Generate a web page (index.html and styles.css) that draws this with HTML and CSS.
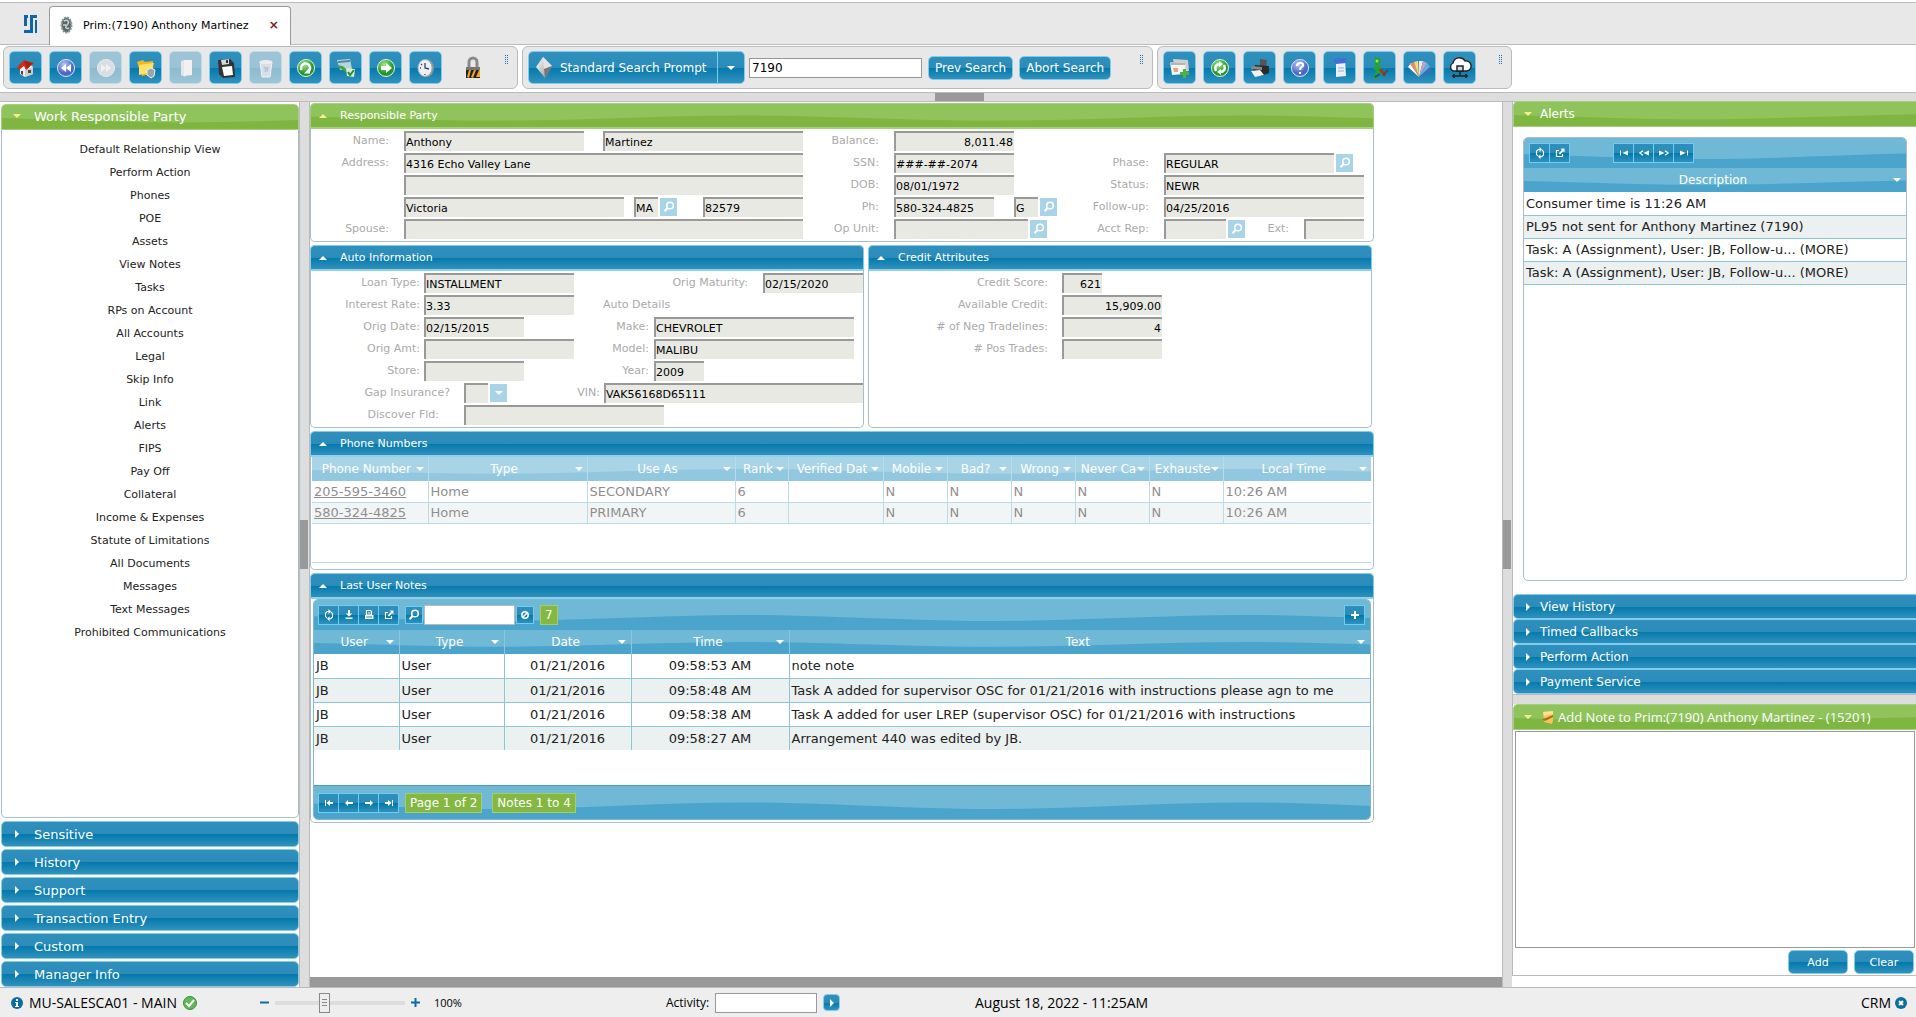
FILE: index.html
```html
<!DOCTYPE html>
<html lang="en">
<head>
    <meta charset="UTF-8">
    <meta name="viewport" content="width=device-width, initial-scale=1.0">
    <title>Prim:(7190) Anthony Martinez</title>
    <link rel="stylesheet" href="styles.css">
</head>
<body>
    <!-- Shared icons -->
    <svg class="sprite" width="0" height="0">
        <defs>
            <radialGradient id="g-green" cx="40%" cy="30%"><stop offset="0" stop-color="#a5e88a"/><stop offset="1" stop-color="#23952a"/></radialGradient>
            <radialGradient id="g-blue" cx="40%" cy="30%"><stop offset="0" stop-color="#b9c8f5"/><stop offset="1" stop-color="#4c68c4"/></radialGradient>
            <linearGradient id="g-grey" x1="0" y1="0" x2="1" y2="1"><stop offset="0" stop-color="#fff"/><stop offset="1" stop-color="#8d8d8d"/></linearGradient>
        </defs>
        <symbol id="i-search" viewBox="0 0 14 14"><circle cx="8" cy="5.5" r="3.3" fill="none" stroke="currentColor" stroke-width="1.5"/><path d="M5.6 8 2.5 11.3" stroke="currentColor" stroke-width="2"/></symbol>
        <symbol id="i-refresh" viewBox="0 0 14 14"><path d="M7.5 3.500H5.200L3.500 5.200v3.300L5 10M6.500 10.700h2.300L10.500 9V5.600L9 4" fill="none" stroke="currentColor" stroke-width="1.100"/><path d="M6.500 1v5L9 3.500zM7.500 8.200v5L5 10.700z" fill="currentColor"/></symbol>
        <symbol id="i-download" viewBox="0 0 14 14"><path d="M6 2h2v3.500h2.200L7 8.500 3.800 5.500H6zM3.500 9.500h7V11h-7z" fill="currentColor"/></symbol>
        <symbol id="i-print" viewBox="0 0 14 14"><path d="M4.500 2.500h4l1 1V7h-5z" fill="none" stroke="currentColor" stroke-width="1.200"/><path d="M3 7h8.500v4H3zM6 4.500h2.500v1H6z" fill="currentColor"/><path d="M4.500 9h5.500" stroke="#0b7fae"/></symbol>
        <symbol id="i-popout" viewBox="0 0 14 14"><path d="M6 4.500H3.500v6h6V8" fill="none" stroke="currentColor" stroke-width="1.200"/><path d="M7.500 2.500h4v4L10.200 5.200 7 8.500 5.800 7.300 9 4z" fill="currentColor"/></symbol>
        <symbol id="i-cancel" viewBox="0 0 14 14"><circle cx="7" cy="7" r="3.2" fill="none" stroke="currentColor" stroke-width="1.500"/><path d="M5 9l4-4" stroke="currentColor" stroke-width="1.500"/></symbol>
        <symbol id="i-plus" viewBox="0 0 14 14"><path d="M6 3h2v3h3v2H8v3H6V8H3V6h3z" fill="currentColor"/></symbol>
        <symbol id="i-left" viewBox="0 0 14 14"><path d="M3 7 6 4v2h5v2H6v2z" fill="currentColor"/></symbol>
        <symbol id="i-right" viewBox="0 0 14 14"><path d="M11 7 8 4v2H3v2h5v2z" fill="currentColor"/></symbol>
        <symbol id="i-first" viewBox="0 0 14 14"><path d="M3 4h1v6H3zM4.500 7 8 4v2h3v2H8v2z" fill="currentColor"/></symbol>
        <symbol id="i-last" viewBox="0 0 14 14"><path d="M10 4h1v6h-1zM9.500 7 6 4v2H3v2h3v2z" fill="currentColor"/></symbol>
        <symbol id="i-seek-first" viewBox="0 0 14 14"><path d="M3 4.500h1v5H3zM11 4.500v5L5.500 7z" fill="currentColor"/></symbol>
        <symbol id="i-seek-prev" viewBox="0 0 14 14"><path d="M12 4.500v5L6.500 7z" fill="currentColor"/><path d="M6 4.800 2.800 7 6 9.200" fill="none" stroke="currentColor" stroke-width="1.200"/></symbol>
        <symbol id="i-seek-next" viewBox="0 0 14 14"><path d="M2 4.500v5L7.500 7z" fill="currentColor"/><path d="M8 4.800 11.200 7 8 9.200" fill="none" stroke="currentColor" stroke-width="1.200"/></symbol>
        <symbol id="i-seek-last" viewBox="0 0 14 14"><path d="M10 4.500h1v5h-1zM3 4.500v5L8.500 7z" fill="currentColor"/></symbol>
    </svg>

    <div class="tabs">
        <svg class="brand" width="14" height="18" viewBox="0 0 14 18"><path d="M6 0h7v3H9v15H0v-3h6zM0 0h4v3H3v8H0zM11 5h2v13h-2z" fill="#0d66a8"/></svg>
        <div class="tab">
            <svg width="13" height="18" viewBox="0 0 13 18"><ellipse cx="6.500" cy="9" rx="5" ry="7.500" fill="#566866" stroke="#8b9a98" stroke-width="2" stroke-dasharray="2 1"/><path d="M4 5c4-2 6 1 3 4s0 4 2 3M3 9h3" fill="none" stroke="#c5d0ce" stroke-width="1.500"/></svg>
            <span>Prim:(7190) Anthony Martinez</span>
            <button class="tab-close" aria-label="Close tab">×</button>
        </div>
    </div>

    <div class="toolbar">
        <div class="group main-group">
            <button class="tool" aria-label="Home"><svg viewBox="0 0 20 20"><path d="M4 9v7l5 3 8-3V9l-5-5z" fill="#eee"/><path d="M9 19v-7l8-3v7z" fill="#ccc"/><path d="M1 9 8 2l10 3-8 7-2-4-5 4z" fill="#c8321c"/><path d="M8 3l9 2-6 6z" fill="#a52312"/><path d="M5 13h2v4l-2-1zM12 12h3v3h-3z" fill="#543"/></svg></button>
            <button class="tool" aria-label="Back"><svg viewBox="0 0 20 20"><circle cx="10" cy="10" r="8.500" fill="url(#g-blue)" stroke="#dfe5f5"/><path d="M10 6v8l-5-4zM15 6v8l-5-4z" fill="#fff"/></svg></button>
            <button class="tool off" aria-label="Forward" disabled><svg viewBox="0 0 20 20"><circle cx="10" cy="10" r="8.500" fill="#c7cfdf" stroke="#eee"/><path d="M10 6v8l5-4zM5 6v8l5-4z" fill="#fff"/></svg></button>
            <button class="tool" aria-label="Open folder"><svg viewBox="0 0 20 20"><path d="M1 4l6-2 2 2 8-1v4l1 8-12 3z" fill="#f2b91e"/><path d="M3 7l15-2-3 9-12 3z" fill="#ffe368"/><path d="M11 12l4-2 4 2-1 6-3 2-4-3z" fill="#9aa5aa" stroke="#eee"/></svg></button>
            <button class="tool off" aria-label="Copy" disabled><svg viewBox="0 0 20 20"><path d="M5 3l4-1v17l-4-2z" fill="#dfe7eb"/><path d="M8 2h8v15l-8 1z" fill="#fff"/></svg></button>
            <button class="tool" aria-label="Save"><svg viewBox="0 0 20 20"><path d="M2 2l12-1 4 4 1 14-12 1-4-4z" fill="#333"/><path d="M5 2l8-1v5L6 7z" fill="#d5d8da"/><path d="M6 9l10-1 1 9-9 1z" fill="#fff"/><path d="M10 2h2v3h-2z" fill="#333"/></svg></button>
            <button class="tool off" aria-label="Delete" disabled><svg viewBox="0 0 20 20"><path d="M4 4h12l-2 15H6z" fill="#c2d2e8" stroke="#fff"/><ellipse cx="10" cy="4" rx="6.500" ry="2" fill="#eef3fa"/><path d="M8 9l4 4m0-4-3 5" stroke="#7690c4" stroke-width="2"/></svg></button>
            <button class="tool" aria-label="Reload"><svg viewBox="0 0 20 20"><circle cx="10" cy="10" r="8.500" fill="url(#g-green)" stroke="#dff5dd"/><path d="M5.500 12a4.500 4.500 0 1 1 7 1.500" fill="none" stroke="#fff" stroke-width="2.500"/><path d="M14 9v6.500H8z" fill="#fff"/></svg></button>
            <button class="tool" aria-label="Transfer records"><svg viewBox="0 0 20 20"><path d="M1 2l13-1 2 10-12 1z" fill="#b9d3dd"/><path d="M2 4l12-1" stroke="#508aa6" stroke-width="2"/><path d="M3 9c5-1 5 4 8 4" fill="none" stroke="#3aa63d" stroke-width="3"/><path d="M10 10l9 1-1 8-7-1z" fill="#dceadb"/><path d="M12 14l2 3 4-5" fill="none" stroke="#249029" stroke-width="2"/></svg></button>
            <button class="tool" aria-label="Go"><svg viewBox="0 0 20 20"><circle cx="10" cy="10" r="8.500" fill="url(#g-green)" stroke="#dff5dd"/><path d="M5 8h5V5l6 5-6 5v-3H5z" fill="#fff"/></svg></button>
            <button class="tool" aria-label="History"><svg viewBox="0 0 20 20"><ellipse cx="11" cy="10" rx="7" ry="9" fill="#87939a"/><ellipse cx="9" cy="10" rx="7" ry="8.500" fill="#edf0f2" stroke="#a3adb3"/><path d="M9 5v5l4 1M4 10h1M9 17v-1M5 6l1 1" stroke="#37474f" stroke-width="1.300" fill="none"/></svg></button>
            <svg class="lock" width="16" height="23" viewBox="0 0 16 23"><path d="M4 13V6a4 4 0 0 1 8 0v7" fill="none" stroke="#8a8a8a" stroke-width="3"/><path d="M1 13h14v9H1z" fill="#222"/><path d="M2 21l2-7h2l-2 8zM6 21l3-7h2l-3 8zM11 21l3-7h1v7z" fill="#f0a62a"/><path d="M1 11h14v3H1z" fill="#777"/></svg>
            <span class="grip"></span>
        </div>
        <div class="group search-group">
            <div class="combo">
                <button class="combo-main"><svg width="16" height="24" viewBox="0 0 16 24"><path d="M7 1 16 10 9 22 0 11z" fill="url(#g-grey)"/><path d="M7 1l1 12 8-3z" fill="#e4e4e4"/><path d="M8 13l8-3-7 12z" fill="#777"/></svg>Standard Search Prompt</button>
                <button class="combo-arrow" aria-label="Choose search prompt"><i class="tri down"></i></button>
            </div>
            <input class="search-box" type="text" value="7190" aria-label="Search">
            <button class="btn">Prev Search</button>
            <button class="btn">Abort Search</button>
            <span class="grip"></span>
        </div>
        <div class="group side-group">
            <button class="tool" aria-label="Add window"><svg viewBox="0 0 20 20"><path d="M3 1l15 1 1 11-14 2z" fill="#cfcfcf"/><path d="M0 4l15 1 1 11-14 1z" fill="#f4f4f2"/><path d="M0 4l15 1v2L1 7z" fill="#b5b5b5"/><path d="M3 10h5v4H4z" fill="#e9a48a"/><path d="M13 11h3v3h3v3h-3v3h-3v-3h-3v-3h3z" fill="#4db33e"/></svg></button>
            <button class="tool" aria-label="Refresh"><svg viewBox="0 0 20 20"><circle cx="10" cy="10" r="8.500" fill="url(#g-green)" stroke="#dff5dd"/><path d="M6 13c-2-4 0-7 4-7M14 7c2 4 0 7-4 7" fill="none" stroke="#fff" stroke-width="2.500"/><path d="M9 3l4 3-4 3zM11 11v6l-4-3z" fill="#fff"/></svg></button>
            <button class="tool" aria-label="Print"><svg viewBox="0 0 20 20"><path d="M10 1l7 1-1 7h-6z" fill="#555"/><path d="M5 7l14 1v7l-8 3-8-5z" fill="#2b2b2b"/><path d="M2 8l10 1v3L1 11z" fill="#888"/><path d="M1 13l9-1 4 5-9 2z" fill="#f1f1f1"/></svg></button>
            <button class="tool" aria-label="Help"><svg viewBox="0 0 20 20"><circle cx="10" cy="10" r="8.500" fill="url(#g-blue)" stroke="#dfe5f5"/><path d="M7 8c0-4 7-4 6-1 0 2-3 2-3 5M10 14v2" fill="none" stroke="#fff" stroke-width="2.200"/></svg></button>
            <button class="tool" aria-label="Document"><svg viewBox="0 0 20 20"><path d="M6 1h9l1 17-10 1z" fill="#eaf0f4"/><path d="M3 2l4-2h9v5l-10 1z" fill="#3f6fd8"/><path d="M8 10h6M8 13h6" stroke="#9fb0bd"/></svg></button>
            <button class="tool" aria-label="Routes"><svg viewBox="0 0 20 20"><path d="M5-1l5 1 1 4-2 3 3 3-2 3 2 3-5 5H2l4-8-3-3 3-3-2-3z" fill="#22a33a"/><circle cx="7" cy="3" r="1.500" fill="#b7d94c"/><path d="M10 11l5 7" stroke="#a8322c" stroke-width="2.500"/><path d="M13 17l5-5" stroke="#5c4646" stroke-width="2"/><path d="M5 19l5-3" stroke="#2b3fc0" stroke-width="2"/></svg></button>
            <button class="tool" aria-label="Colors"><svg viewBox="0 0 20 20"><path d="M9 19-2 9l3-4z" fill="#fff"/><path d="M9 19 0 6l4-2z" fill="#e58a70"/><path d="M9 19 4 4l4-1z" fill="#f5dd7a"/><path d="M9 19V3h4z" fill="#efe9d8"/><path d="M9 19l4-16 4 2z" fill="#c79bd0"/><path d="M9 19l8-14 3 4z" fill="#5ab3dd"/><path d="M9 19 20 9l2 5z" fill="#3c6eb0"/></svg></button>
            <button class="tool" aria-label="Cloud network"><svg viewBox="0 0 24 24"><path d="M5 15a4.500 4.500 0 0 1 0-8 6.500 6.500 0 0 1 12-2 5 5 0 0 1 2 10z" fill="#fff" stroke="#222" stroke-width="1.400"/><path d="M9 10h6v5H9z" fill="#bfe0ee" stroke="#222" stroke-width="1.500"/><path d="M12 15v5M4 20h16M6 18v4M18 18v4" fill="none" stroke="#222" stroke-width="1.500"/></svg></button>
            <span class="grip"></span>
        </div>
    </div>
    <div class="splitter-h"><span class="thumb"></span></div>

    <div class="workspace">
        <aside class="left-pane">
            <h2 class="bar green"><i class="tri down"></i>Work Responsible Party</h2>
            <nav class="menu">
                <a href="#">Default Relationship View</a>
                <a href="#">Perform Action</a>
                <a href="#">Phones</a>
                <a href="#">POE</a>
                <a href="#">Assets</a>
                <a href="#">View Notes</a>
                <a href="#">Tasks</a>
                <a href="#">RPs on Account</a>
                <a href="#">All Accounts</a>
                <a href="#">Legal</a>
                <a href="#">Skip Info</a>
                <a href="#">Link</a>
                <a href="#">Alerts</a>
                <a href="#">FIPS</a>
                <a href="#">Pay Off</a>
                <a href="#">Collateral</a>
                <a href="#">Income &amp; Expenses</a>
                <a href="#">Statute of Limitations</a>
                <a href="#">All Documents</a>
                <a href="#">Messages</a>
                <a href="#">Text Messages</a>
                <a href="#">Prohibited Communications</a>
            </nav>
            <button class="bar blue"><i class="tri right"></i>Sensitive</button>
            <button class="bar blue"><i class="tri right"></i>History</button>
            <button class="bar blue"><i class="tri right"></i>Support</button>
            <button class="bar blue"><i class="tri right"></i>Transaction Entry</button>
            <button class="bar blue"><i class="tri right"></i>Custom</button>
            <button class="bar blue"><i class="tri right"></i>Manager Info</button>
        </aside>

        <div class="splitter-v"><span class="thumb"></span></div>

        <main class="center">
            <div class="panels">
                <section class="panel party">
                    <h3 class="bar green"><i class="tri up"></i>Responsible Party</h3>
                    <div class="form">
                        <div class="block">
                            <div class="row"><label class="l-name" for="first">Name:</label><input class="w180" id="first" value="Anthony" readonly><input class="push w200" aria-label="Last name" value="Martinez" readonly></div>
                            <div class="row"><label class="l-name" for="addr">Address:</label><input class="fill" id="addr" value="4316 Echo Valley Lane" readonly></div>
                            <div class="row"><span class="l-name"></span><input class="fill" aria-label="Address line 2" readonly></div>
                            <div class="row"><span class="l-name"></span><input class="w220" aria-label="City" value="Victoria" readonly><input class="w24 gap10" aria-label="State" value="MA" readonly><button class="pick" aria-label="Look up state"><svg><use href="#i-search"/></svg></button><input class="push w100" aria-label="Zip" value="82579" readonly></div>
                            <div class="row"><label class="l-name" for="spouse">Spouse:</label><input class="fill" id="spouse" readonly></div>
                        </div>
                        <div class="block mid">
                            <div class="row"><label class="l-bal" for="bal">Balance:</label><input class="w120 num" id="bal" value="8,011.48" readonly></div>
                            <div class="row"><label class="l-bal" for="ssn">SSN:</label><input class="w120" id="ssn" value="###-##-2074" readonly></div>
                            <div class="row"><label class="l-bal" for="dob">DOB:</label><input class="w120" id="dob" value="08/01/1972" readonly></div>
                            <div class="row"><label class="l-bal" for="ph">Ph:</label><input class="w100" id="ph" value="580-324-4825" readonly><input class="w24 gap20" aria-label="Phone status" value="G" readonly><button class="pick" aria-label="Look up phone status"><svg><use href="#i-search"/></svg></button></div>
                            <div class="row"><label class="l-bal" for="op">Op Unit:</label><input class="w134" id="op" readonly><button class="pick" aria-label="Look up op unit"><svg><use href="#i-search"/></svg></button></div>
                        </div>
                        <div class="block end">
                            <div class="row"></div>
                            <div class="row"><label class="l-phase" for="phase">Phase:</label><input class="w170" id="phase" value="REGULAR" readonly><button class="pick" aria-label="Look up phase"><svg><use href="#i-search"/></svg></button></div>
                            <div class="row"><label class="l-phase" for="status">Status:</label><input class="w200" id="status" value="NEWR" readonly></div>
                            <div class="row"><label class="l-phase" for="follow">Follow-up:</label><input class="w200" id="follow" value="04/25/2016" readonly></div>
                            <div class="row"><label class="l-phase" for="rep">Acct Rep:</label><input class="w62" id="rep" readonly><button class="pick" aria-label="Look up account rep"><svg><use href="#i-search"/></svg></button><label class="l-ext" for="ext">Ext:</label><input class="w60" id="ext" readonly></div>
                        </div>
                    </div>
                </section>

                <div class="pair">
                    <section class="panel auto">
                        <h3 class="bar blue"><i class="tri up"></i>Auto Information</h3>
                        <div class="form">
                            <div class="block">
                                <div class="row"><label class="l-loan" for="loan">Loan Type:</label><input class="w150" id="loan" value="INSTALLMENT" readonly></div>
                                <div class="row"><label class="l-loan" for="rate">Interest Rate:</label><input class="w150" id="rate" value="3.33" readonly></div>
                                <div class="row"><label class="l-loan" for="odate">Orig Date:</label><input class="w100" id="odate" value="02/15/2015" readonly></div>
                                <div class="row"><label class="l-loan" for="amt">Orig Amt:</label><input class="w150" id="amt" readonly></div>
                                <div class="row"><label class="l-loan" for="store">Store:</label><input class="w100" id="store" readonly></div>
                                <div class="row"><label class="l-gap" for="gap">Gap Insurance?</label><input class="w24" id="gap" readonly><button class="pick" aria-label="Choose gap insurance"><i class="tri down"></i></button></div>
                                <div class="row"><label class="l-disc" for="disc">Discover Fld:</label><input class="w200" id="disc" readonly></div>
                            </div>
                            <div class="block car">
                                <div class="row last"><label for="mat">Orig Maturity:</label><input class="w100" id="mat" value="02/15/2020" readonly></div>
                                <div class="row"><span class="sub">Auto Details</span></div>
                                <div class="row"><label class="l-make" for="make">Make:</label><input class="w200" id="make" value="CHEVROLET" readonly></div>
                                <div class="row"><label class="l-make" for="model">Model:</label><input class="w200" id="model" value="MALIBU" readonly></div>
                                <div class="row"><label class="l-make" for="year">Year:</label><input class="w50" id="year" value="2009" readonly></div>
                                <div class="row"><label class="l-vin" for="vin">VIN:</label><input class="fill" id="vin" value="VAK56168D65111" readonly></div>
                            </div>
                        </div>
                    </section>
                    <section class="panel credit">
                        <h3 class="bar blue"><i class="tri up"></i>Credit Attributes</h3>
                        <div class="form">
                            <div class="block">
                                <div class="row"><label class="l-score" for="score">Credit Score:</label><input class="w40 num" id="score" value="621" readonly></div>
                                <div class="row"><label class="l-score" for="avail">Available Credit:</label><input class="w100 num" id="avail" value="15,909.00" readonly></div>
                                <div class="row"><label class="l-score" for="neg"># of Neg Tradelines:</label><input class="w100 num" id="neg" value="4" readonly></div>
                                <div class="row"><label class="l-score" for="pos"># Pos Trades:</label><input class="w100 num" id="pos" readonly></div>
                            </div>
                        </div>
                    </section>
                </div>

                <section class="panel">
                    <h3 class="bar blue"><i class="tri up"></i>Phone Numbers</h3>
                    <div class="grid-box phones-box">
                        <table class="grid phones">
                            <colgroup><col class="p1"><col class="p2"><col class="p3"><col class="p4"><col class="p5"><col class="p6"><col class="p6"><col class="p6"><col class="p7"><col class="p7"><col></colgroup>
                            <thead>
                                <tr>
                                    <th><div><span>Phone Number</span><i class="tri down"></i></div></th>
                                    <th><div><span>Type</span><i class="tri down"></i></div></th>
                                    <th><div><span>Use As</span><i class="tri down"></i></div></th>
                                    <th><div><span>Rank</span><i class="tri down"></i></div></th>
                                    <th><div><span>Verified Dat</span><i class="tri down"></i></div></th>
                                    <th><div><span>Mobile</span><i class="tri down"></i></div></th>
                                    <th><div><span>Bad?</span><i class="tri down"></i></div></th>
                                    <th><div><span>Wrong</span><i class="tri down"></i></div></th>
                                    <th><div><span>Never Ca</span><i class="tri down"></i></div></th>
                                    <th><div><span>Exhauste</span><i class="tri down"></i></div></th>
                                    <th><div><span>Local Time</span><i class="tri down"></i></div></th>
                                </tr>
                            </thead>
                            <tbody>
                                <tr><td><a href="#">205-595-3460</a></td><td>Home</td><td>SECONDARY</td><td>6</td><td></td><td>N</td><td>N</td><td>N</td><td>N</td><td>N</td><td>10:26 AM</td></tr>
                                <tr><td><a href="#">580-324-4825</a></td><td>Home</td><td>PRIMARY</td><td>6</td><td></td><td>N</td><td>N</td><td>N</td><td>N</td><td>N</td><td>10:26 AM</td></tr>
                            </tbody>
                        </table>
                    </div>
                </section>

                <section class="panel">
                    <h3 class="bar blue"><i class="tri up"></i>Last User Notes</h3>
                    <div class="grid-box notes-box">
                        <div class="grid-tools">
                            <div class="minis">
                                <button class="mini" aria-label="Refresh"><svg><use href="#i-refresh"/></svg></button>
                                <button class="mini" aria-label="Download"><svg><use href="#i-download"/></svg></button>
                                <button class="mini" aria-label="Print"><svg><use href="#i-print"/></svg></button>
                                <button class="mini" aria-label="Pop out"><svg><use href="#i-popout"/></svg></button>
                            </div>
                            <div class="filter">
                                <button class="mini" aria-label="Search notes"><svg><use href="#i-search"/></svg></button>
                                <input type="text" aria-label="Search text">
                                <button class="mini" aria-label="Clear search"><svg><use href="#i-cancel"/></svg></button>
                            </div>
                            <span class="badge">7</span>
                            <button class="mini add" aria-label="Add note"><svg><use href="#i-plus"/></svg></button>
                        </div>
                        <table class="grid notes">
                            <colgroup><col class="n1"><col class="n2"><col class="n3"><col class="n4"><col></colgroup>
                            <thead>
                                <tr>
                                    <th><div><span>User</span><i class="tri down"></i></div></th>
                                    <th><div><span>Type</span><i class="tri down"></i></div></th>
                                    <th><div><span>Date</span><i class="tri down"></i></div></th>
                                    <th><div><span>Time</span><i class="tri down"></i></div></th>
                                    <th><div><span>Text</span><i class="tri down"></i></div></th>
                                </tr>
                            </thead>
                            <tbody>
                                <tr><td>JB</td><td>User</td><td class="mid">01/21/2016</td><td class="mid">09:58:53 AM</td><td>note note</td></tr>
                                <tr><td>JB</td><td>User</td><td class="mid">01/21/2016</td><td class="mid">09:58:48 AM</td><td>Task A added for supervisor OSC for 01/21/2016 with instructions please agn to me</td></tr>
                                <tr><td>JB</td><td>User</td><td class="mid">01/21/2016</td><td class="mid">09:58:38 AM</td><td>Task A added for user LREP (supervisor OSC) for 01/21/2016 with instructions</td></tr>
                                <tr><td>JB</td><td>User</td><td class="mid">01/21/2016</td><td class="mid">09:58:27 AM</td><td>Arrangement 440 was edited by JB.</td></tr>
                            </tbody>
                        </table>
                        <div class="grid-foot">
                            <div class="minis">
                                <button class="mini" aria-label="First page"><svg><use href="#i-first"/></svg></button>
                                <button class="mini" aria-label="Previous page"><svg><use href="#i-left"/></svg></button>
                                <button class="mini" aria-label="Next page"><svg><use href="#i-right"/></svg></button>
                                <button class="mini" aria-label="Last page"><svg><use href="#i-last"/></svg></button>
                            </div>
                            <span class="badge">Page 1 of 2</span>
                            <span class="badge">Notes 1 to 4</span>
                        </div>
                    </div>
                </section>
            </div>
            <div class="hscroll"></div>
        </main>

        <div class="splitter-v"><span class="thumb"></span></div>

        <aside class="right-pane">
            <h3 class="bar green"><i class="tri down"></i>Alerts</h3>
            <div class="alerts">
                <div class="grid-box alerts-box">
                    <div class="grid-tools">
                        <div class="minis">
                            <button class="mini" aria-label="Refresh"><svg><use href="#i-refresh"/></svg></button>
                            <button class="mini" aria-label="Pop out"><svg><use href="#i-popout"/></svg></button>
                        </div>
                        <div class="minis seek">
                            <button class="mini" aria-label="First"><svg><use href="#i-seek-first"/></svg></button>
                            <button class="mini" aria-label="Previous"><svg><use href="#i-seek-prev"/></svg></button>
                            <button class="mini" aria-label="Next"><svg><use href="#i-seek-next"/></svg></button>
                            <button class="mini" aria-label="Last"><svg><use href="#i-seek-last"/></svg></button>
                        </div>
                    </div>
                    <table class="grid alert-list">
                        <thead><tr><th><div><span>Description</span><i class="tri down"></i></div></th></tr></thead>
                        <tbody>
                            <tr><td>Consumer time is 11:26 AM</td></tr>
                            <tr><td>PL95 not sent for Anthony Martinez (7190)</td></tr>
                            <tr><td>Task: A (Assignment), User: JB, Follow-u... (MORE)</td></tr>
                            <tr><td>Task: A (Assignment), User: JB, Follow-u... (MORE)</td></tr>
                        </tbody>
                    </table>
                </div>
            </div>
            <button class="bar blue"><i class="tri right"></i>View History</button>
            <button class="bar blue"><i class="tri right"></i>Timed Callbacks</button>
            <button class="bar blue"><i class="tri right"></i>Perform Action</button>
            <button class="bar blue"><i class="tri right"></i>Payment Service</button>
            <div class="split-gap"></div>
            <h3 class="bar green note-head"><i class="tri down"></i><svg width="12" height="15" viewBox="0 0 12 15"><path d="M1 2l10-1v10l-1 3-8-2z" fill="#f6c35b"/><path d="M0 9l4-1 7-3v2L3 11z" fill="#a86c1f"/><path d="M1 2l10-1v3L2 6z" fill="#ffdf95"/></svg><label for="note">Add Note to Prim:(7190) Anthony Martinez - (15201)</label></h3>
            <textarea id="note"></textarea>
            <div class="note-actions">
                <button class="btn">Add</button>
                <button class="btn">Clear</button>
            </div>
        </aside>
    </div>

    <footer class="status">
        <div class="server">
            <svg width="12" height="12" viewBox="0 0 12 12"><circle cx="6" cy="6" r="6" fill="#0a6f9e"/><path d="M5 2h2v2H5zM4 5h3v4h1v1H4V9h1V6H4z" fill="#fff"/></svg>
            <span>MU-SALESCA01 - MAIN</span>
            <svg width="14" height="14" viewBox="0 0 14 14"><circle cx="7" cy="7" r="6.500" fill="#5fb85a" stroke="#3c8f3a"/><path d="M3 7l3 3 5-6" fill="none" stroke="#fff" stroke-width="2"/></svg>
        </div>
        <div class="zoom">
            <button aria-label="Zoom out"><svg width="9" height="9"><path d="M0 3.500h9v2H0z" fill="#0a6f9e"/></svg></button>
            <input type="range" min="50" max="200" value="105" aria-label="Zoom">
            <button aria-label="Zoom in"><svg width="9" height="9"><path d="M3.500 0h2v3.500H9v2H5.500V9h-2V5.500H0v-2h3.500z" fill="#0a6f9e"/></svg></button>
            <span>100%</span>
        </div>
        <div class="activity">
            <label for="activity">Activity:</label>
            <input type="text" id="activity">
            <button class="go" aria-label="Start activity"><i class="tri right"></i></button>
        </div>
        <div class="clock">August 18, 2022 - 11:25AM</div>
        <div class="crm">CRM <svg width="12" height="12" viewBox="0 0 12 12"><circle cx="6" cy="6" r="6" fill="#0a6f9e"/><path d="M4 4l4 4M8 4l-4 4" stroke="#fff" stroke-width="2"/></svg></div>
    </footer>
</body>
</html>
```

FILE: styles.css
```css
* {
    margin: 0;
    padding: 0;
    box-sizing: border-box;
}

body {
    --blue: linear-gradient(#2f90bd 0, #2b8cbb 50%, #0379ab 51%, #2d8fbc 95%);
    --wave-green: url("data:image/svg+xml,%3Csvg xmlns='http://www.w3.org/2000/svg' width='500' height='26' preserveAspectRatio='none' viewBox='0 0 500 26'%3E%3Cpath fill='%238fc35c' d='M0 0h500v26H0z'/%3E%3Cpath fill='%237fb642' d='M-70 13C10 13 100 19 180 19S350 13 430 13S600 19 680 19V26H-70z'/%3E%3C/svg%3E");
    --wave-blue: url("data:image/svg+xml,%3Csvg xmlns='http://www.w3.org/2000/svg' width='500' height='30' preserveAspectRatio='none' viewBox='0 0 500 30'%3E%3Cpath fill='%236fb8d6' d='M0 0h500v30H0z'/%3E%3Cpath fill='%234aa4cb' d='M-70 15C10 15 100 21 180 21S350 15 430 15S600 21 680 21V30H-70z'/%3E%3C/svg%3E");
    display: flex;
    flex-direction: column;
    height: 100vh;
    min-width: 1200px;
    font-family: "DejaVu Sans", Verdana, sans-serif;
    font-size: 11px;
    color: #222;
    background-color: #fff;
    overflow: hidden;
}

button, input, textarea {
    font-family: inherit;
    font-size: inherit;
}

button {
    border: 0;
    cursor: pointer;
}

.sprite {
    position: absolute;
}

/* arrows */
.tri {
    display: block;
    flex: none;
    width: 0;
    height: 0;
    border: 4px solid transparent;
}

.tri.down {
    border-top-color: currentColor;
    border-bottom-width: 0;
}

.tri.up {
    border-bottom-color: currentColor;
    border-top-width: 0;
}

.tri.right {
    border-left-color: currentColor;
    border-right-width: 0;
    margin: 0 2px;
}

/* tabs */
.tabs {
    display: flex;
    align-items: flex-end;
    height: 43px;
    margin-top: 2px;
    padding-left: 24px;
    background-color: #e8e8e8;
    border-top: 1px solid #bbb;
    border-bottom: 1px solid #bbb;
    flex: none;
}

.brand {
    margin: 0 11px 11px 0;
}

.tab {
    display: flex;
    align-items: center;
    height: 39px;
    width: 242px;
    margin-bottom: -1px;
    padding: 0 0 2px 10px;
    background-color: #fff;
    border: 1px solid #999;
    border-bottom: 0;
    border-radius: 4px 4px 0 0;
    color: #000;
}

.tab span {
    margin: 0 20px 0 10px;
    white-space: nowrap;
}

.tab-close {
    background: none;
    color: #7a1c1c;
    font-size: 12px;
    font-weight: bold;
}

/* toolbar */
.toolbar {
    display: flex;
    gap: 4px;
    padding: 1px 3px 3px;
    border-bottom: 1px solid #bbb;
    flex: none;
}

.group {
    display: flex;
    align-items: center;
    height: 43px;
    padding: 0 5px;
    background-color: #e8e8e8;
    border: 1px solid #bbb;
    border-radius: 6px;
}

.main-group {
    width: 515px;
    gap: 7px;
}

.search-group {
    width: 631px;
}

.side-group {
    width: 355px;
    gap: 7px;
}

.tool {
    display: flex;
    align-items: center;
    justify-content: center;
    width: 33px;
    height: 33px;
    background: var(--blue);
    border: 1px solid #7fcdea;
    border-radius: 5px;
    flex: none;
}

.tool svg {
    width: 20px;
    height: 20px;
    overflow: visible;
}

.side-group .tool:nth-child(8) svg {
    width: 24px;
    height: 24px;
}

.tool.off {
    opacity: 0.4;
}

.lock {
    margin-left: 16px;
}

.grip {
    width: 4px;
    height: 10px;
    margin: 0 3px 18px auto;
    background-image: repeating-linear-gradient(#e8e8e8 0, #e8e8e8 1px, transparent 1px, transparent 2px), repeating-linear-gradient(90deg, #1f6fa0 0, #1f6fa0 1px, transparent 1px, transparent 2px);
}

.combo {
    display: flex;
    width: 217px;
    height: 33px;
    margin-right: 4px;
    background: var(--blue);
    border: 1px solid #7fcdea;
    border-radius: 5px;
}

.combo button {
    display: flex;
    align-items: center;
    background: none;
    color: #fff;
    font-size: 12px;
}

.combo-main {
    flex: 1;
    gap: 8px;
    padding-left: 7px;
    white-space: nowrap;
}

.combo .combo-arrow {
    width: 27px;
    justify-content: center;
    border-left: 1px solid #7fcdea;
}

.search-box {
    width: 173px;
    height: 20px;
    margin-right: 6px;
    padding: 0 2px;
    border: 1px solid #999;
    font-size: 12px;
}

.btn {
    height: 24px;
    padding: 0 6px;
    background: var(--blue);
    border: 1px solid #7fcdea;
    border-radius: 5px;
    color: #fff;
    font-size: 12px;
    white-space: nowrap;
}

.search-group .btn {
    margin-right: 6px;
}

/* splitters */
.splitter-h {
    display: flex;
    justify-content: center;
    height: 9px;
    padding-left: 2px;
    background-color: #ddd;
    border-bottom: 1px solid #bbb;
    flex: none;
}

.splitter-h .thumb {
    width: 49px;
    background-color: #999;
}

.workspace {
    display: flex;
    flex: 1;
    min-height: 0;
}

.splitter-v {
    display: flex;
    align-items: center;
    width: 9px;
    background-color: #ddd;
    flex: none;
}

.splitter-v .thumb {
    width: 8px;
    height: 49px;
    background-color: #999;
}

/* title bars */
.bar {
    display: flex;
    align-items: center;
    width: 100%;
    height: 26px;
    gap: 13px;
    padding-left: 8px;
    border: 1px solid #9ac;
    border-radius: 5px;
    color: #fff;
    font-size: 11px;
    font-weight: normal;
    text-align: left;
    white-space: nowrap;
    flex: none;
}

.bar.blue {
    background: var(--blue);
    border-color: #7fcdea;
}

.bar.green {
    background: var(--wave-green);
    background-size: 500px 100%;
    border-color: #a6cf7c;
    border-radius: 5px 5px 0 0;
}

.bar.green .tri {
    color: #f1f28c;
}

/* left pane */
.left-pane {
    display: flex;
    flex-direction: column;
    gap: 2px;
    width: 300px;
    padding: 2px 0 0 1px;
    border-right: 1px solid #bbb;
    flex: none;
}

.left-pane .bar {
    padding-left: 11px;
    font-size: 13px;
}

.left-pane .bar.green {
    padding-bottom: 2px;
}

.menu {
    display: flex;
    flex-direction: column;
    align-items: center;
    flex: 1;
    min-height: 0;
    margin-top: -2px;
    margin-bottom: 1px;
    padding-top: 8px;
    border: 1px solid #abc;
    border-top: 0;
    border-radius: 0 0 5px 5px;
}

.menu a {
    line-height: 23px;
    color: #222;
    text-decoration: none;
}

/* center pane */
.center {
    display: flex;
    flex-direction: column;
    flex: 1;
    min-width: 0;
    border-left: 1px solid #bbb;
    border-right: 1px solid #bbb;
}

.panels {
    flex: 1;
    min-height: 0;
    max-width: 1064px;
    padding-top: 1px;
}

.hscroll {
    height: 10px;
    background-color: #999;
}

.panel {
    margin-bottom: 3px;
    border: 1px solid #abc;
    border-top: 0;
    border-radius: 5px;
}

.panel .bar {
    width: auto;
    margin: 0 -1px;
    border-radius: 5px 5px 0 0;
    border-bottom: 2px solid #8fd0ea;
}

.panel .bar.green {
    border-bottom-color: #a6cf7c;
}

.form {
    display: flex;
    padding: 2px 0 0 1px;
    color: #aaa;
}

.party .form {
    height: 112px;
}

.row {
    display: flex;
    height: 22px;
}

.row > * {
    flex: none;
}

.row label, .row .sub {
    line-height: 19px;
    text-align: right;
    white-space: nowrap;
}

.row input {
    height: 20px;
    min-width: 0;
    padding: 0 1px 0 0;
    background-color: #e9e9e4;
    border: 0 solid #999;
    border-width: 2px 0 0 2px;
    color: #000;
}

.row .num {
    text-align: right;
}

.row .fill {
    flex: 1;
}

.party .block:first-child {
    width: 491px;
}

.block.mid {
    width: 260px;
}

.l-name {
    width: 77px;
    margin-right: 15px;
}

.l-bal {
    width: 76px;
    margin-right: 15px;
}

.l-phase {
    width: 86px;
    margin-right: 15px;
}

.l-ext {
    width: 44px;
    margin-right: 15px;
}

.l-loan, .l-gap, .l-disc {
    width: 108px;
    margin-right: 4px;
}

.l-gap {
    width: 138px;
    margin-right: 14px;
}

.l-disc {
    width: 127px;
    margin-right: 25px;
}

.l-make {
    width: 77px;
    margin-right: 5px;
}

.l-vin {
    width: 28px;
    margin-right: 4px;
}

.l-score {
    width: 178px;
    margin-right: 14px;
}

.sub {
    margin-left: 31px;
}

.push { margin-left: auto; }
.gap10 { margin-left: 10px; }
.gap20 { margin-left: 20px; }
.w24 { width: 24px; }
.w40 { width: 40px; }
.w50 { width: 50px; }
.w60 { width: 60px; }
.w62 { width: 62px; }
.w100 { width: 100px; }
.w120 { width: 120px; }
.w134 { width: 134px; }
.w150 { width: 150px; }
.w170 { width: 170px; }
.w180 { width: 180px; }
.w200 { width: 200px; }
.w220 { width: 220px; }

.pick {
    display: flex;
    align-items: center;
    justify-content: center;
    width: 17px;
    height: 18px;
    margin: 1px 0 0 2px;
    background-color: #a9d3e6;
    color: #fff;
}

.pick svg {
    width: 14px;
    height: 14px;
}

.pair {
    display: flex;
    gap: 4px;
    padding-right: 2px;
}

.pair .form {
    height: 156px;
}

.auto {
    width: 554px;
}

.auto .block:first-child {
    width: 260px;
}

.block.car {
    flex: 1;
}

.row.last {
    justify-content: flex-end;
    gap: 15px;
}

.credit {
    flex: 1;
}

/* data grids */
.grid-box {
    display: flex;
    flex-direction: column;
}

.grid {
    width: 100%;
    table-layout: fixed;
    border-collapse: collapse;
}

.grid thead {
    background: var(--wave-blue);
    background-size: 500px 100%;
}

.grid th {
    height: 24px;
    border-right: 1px solid #8cc6dd;
    color: #fff;
    font-size: 12px;
    font-weight: normal;
}

.grid th div {
    display: flex;
    align-items: center;
    padding: 0 5px 0 9px;
}

.grid th span {
    flex: 1;
    overflow: hidden;
    white-space: nowrap;
}

.grid td {
    height: 24px;
    padding-left: 2px;
    border: 1px solid #8cc6dd;
    border-left-width: 0;
    border-top-width: 0;
    font-size: 13px;
    white-space: nowrap;
    overflow: hidden;
}

.grid th:last-child, .grid td:last-child {
    border-right: 0;
}

.grid tbody tr:nth-child(even) {
    background-color: #ebf0f0;
}

.grid .mid {
    text-align: center;
    padding: 0;
}

.phones-box {
    height: 106px;
    margin: 0 2px 6px 1px;
    border-bottom: 1px solid #b5dfe8;
}

.phones {
    opacity: 0.6;
}

.phones td {
    height: 21px;
    color: #444;
}

.phones td a {
    color: #444;
}

.phones th div {
    padding: 0 4px 0 5px;
}

.p1 { width: 116px; }
.p2 { width: 159px; }
.p3 { width: 148px; }
.p4 { width: 53px; }
.p5 { width: 95px; }
.p6 { width: 64px; }
.p7 { width: 74px; }

.notes-box {
    height: 221px;
    margin: 0 2px 2px 2px;
    border: 1px solid #7bb8d4;
    border-radius: 5px;
    overflow: hidden;
}

.grid-tools, .grid-foot {
    display: flex;
    align-items: center;
    height: 30px;
    padding: 0 5px;
    background: var(--wave-blue);
    background-size: 500px 100%;
    flex: none;
}

.notes-box .grid-tools, .grid-foot {
    padding-left: 4px;
}

.grid-foot {
    height: 34px;
    gap: 10px;
    margin-top: auto;
    border-top: 1px solid #4a9bc0;
}

.grid-foot .minis {
    margin-right: -4px;
}

.n1 { width: 85px; }
.n2 { width: 105px; }
.n3 { width: 127px; }
.n4 { width: 158px; }

.notes tbody tr:last-child td {
    border-bottom: 0;
}

.minis {
    display: flex;
}

.mini {
    display: flex;
    align-items: center;
    justify-content: center;
    width: 21px;
    height: 20px;
    background: var(--blue);
    border: 1px solid #6fcdf0;
    color: #fff;
}

.minis .mini + .mini {
    margin-left: -1px;
}

.mini svg {
    width: 14px;
    height: 14px;
    flex: none;
}

.filter {
    display: flex;
    align-items: center;
    gap: 1px;
    margin: 0 6px;
}

.filter .mini {
    width: 18px;
    height: 18px;
}

.filter input {
    width: 91px;
    height: 20px;
    padding: 0 2px;
    border: 1px solid #bbb;
}

.badge {
    height: 20px;
    padding: 0 4px;
    background-color: #84b842;
    border: 1px solid #9fd06a;
    color: #fff;
    font-size: 12px;
    line-height: 18px;
}

.mini.add {
    margin-left: auto;
}

/* right pane */
.right-pane {
    display: flex;
    flex-direction: column;
    width: 404px;
    margin-top: -1px;
    margin-bottom: 11px;
    border-bottom: 1px solid #bbb;
    border-left: 1px solid #bbb;
    flex: none;
}

.right-pane .bar {
    height: 25px;
    gap: 8px;
    padding-left: 10px;
    border-width: 1px 0 1px 1px;
    border-radius: 5px 0 0 5px;
    font-size: 12px;
}

.right-pane .bar.green {
    height: 26px;
    border-radius: 5px 0 0 0;
}

.alerts {
    flex: 1;
    min-height: 0;
    padding: 10px 9px 13px 10px;
}

.alerts-box {
    height: 100%;
    border: 1px solid #abc;
    border-radius: 5px;
    overflow: hidden;
}

.seek {
    margin-left: 43px;
}

.alert-list td {
    height: 23px;
    border-bottom: 1px solid #8cc6dd;
}

.split-gap {
    height: 10px;
    background-color: #ddd;
    border-top: 1px solid #bbb;
}

.right-pane .note-head {
    gap: 4px;
    font-family: "Open Sans", sans-serif;
    font-size: 13px;
}

.note-head .tri {
    margin-right: 6px;
}

.right-pane textarea {
    height: 217px;
    margin: 1px 1px 2px 2px;
    border: 1px solid #999;
    resize: none;
}

.note-actions {
    display: flex;
    justify-content: flex-end;
    gap: 6px;
    padding: 0 2px 1px 0;
}

.note-actions .btn {
    width: 60px;
    font-size: 11px;
}

/* status bar */
.status {
    display: flex;
    align-items: center;
    height: 30px;
    padding: 0 9px 0 11px;
    background-color: #eee;
    border-top: 1px solid #bbb;
    font-family: "Open Sans", sans-serif;
    font-size: 14px;
    color: #000;
    flex: none;
}

.server {
    display: flex;
    align-items: center;
    gap: 6px;
    width: 249px;
    white-space: nowrap;
}

.zoom {
    display: flex;
    align-items: center;
    gap: 6px;
    width: 406px;
}

.zoom button {
    background: none;
    line-height: 0;
}

.zoom span {
    margin-left: 8px;
    font-size: 11px;
}

.zoom input {
    width: 130px;
    height: 22px;
    appearance: none;
    background: linear-gradient(#ddd, #ddd) center / 100% 4px no-repeat;
}

.zoom input::-webkit-slider-thumb {
    appearance: none;
    width: 11px;
    height: 20px;
    background: repeating-linear-gradient(#888 0, #888 1px, transparent 1px, transparent 3px) center / 5px 7px no-repeat #eee;
    border: 1px solid #888;
}

.activity {
    display: flex;
    align-items: center;
    gap: 6px;
    width: 309px;
    font-size: 12px;
}

.activity input {
    width: 102px;
    height: 20px;
    border: 1px solid #999;
}

.go {
    display: flex;
    align-items: center;
    justify-content: center;
    width: 17px;
    height: 17px;
    background: var(--blue);
    border: 1px solid #7fcdea;
    border-radius: 4px;
    color: #fff;
}

.crm {
    display: flex;
    align-items: center;
    gap: 4px;
    margin-left: auto;
}
```
